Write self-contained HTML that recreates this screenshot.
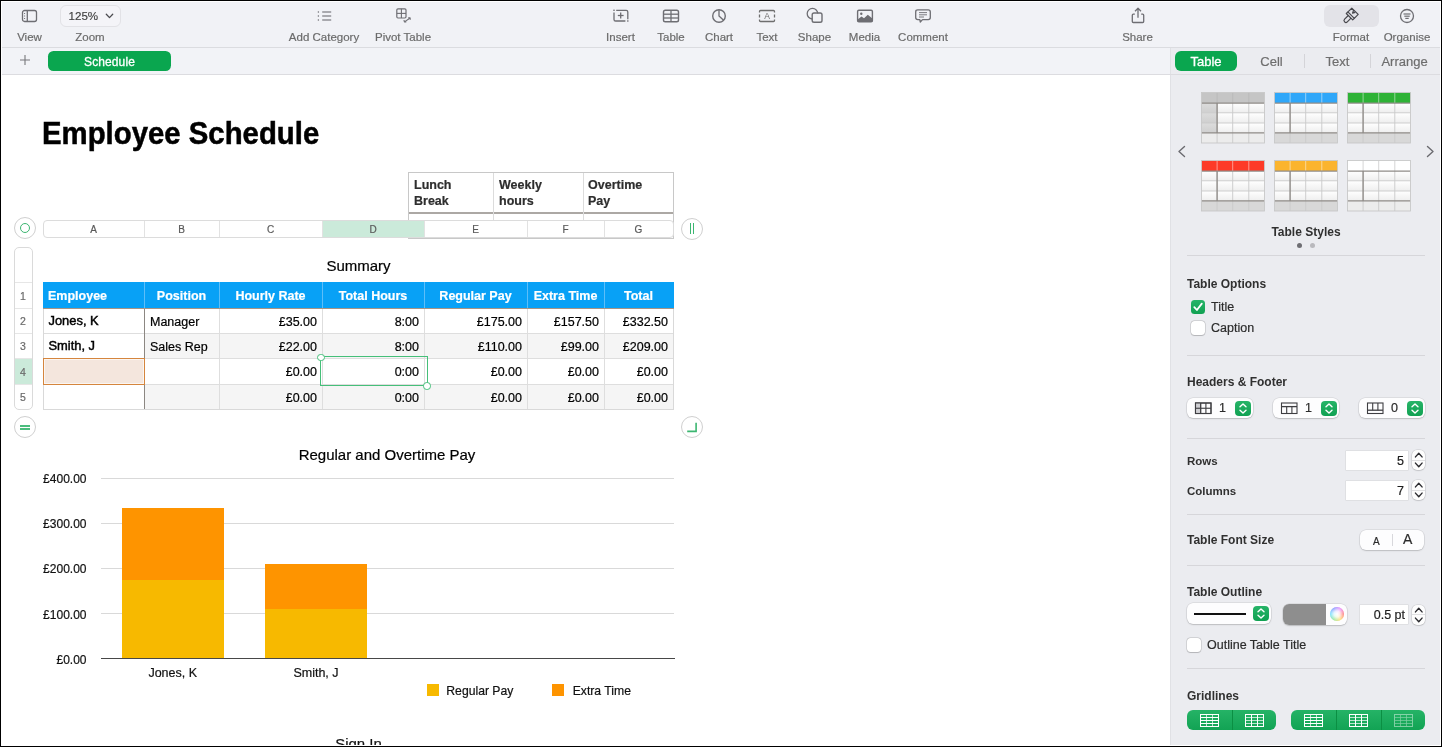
<!DOCTYPE html>
<html><head><meta charset="utf-8">
<style>
*{box-sizing:border-box;margin:0;padding:0}
html,body{width:1442px;height:747px;overflow:hidden;background:#000}
body{font-family:"Liberation Sans",sans-serif;position:relative;-webkit-font-smoothing:antialiased}
#frame{position:absolute;left:1px;top:1px;width:1440px;height:745px;background:#fff}
#app{position:absolute;left:0;top:0;width:1442px;height:747px;clip-path:inset(2px 2px 2px 2px);overflow:hidden;}
.a{position:absolute}
.t{position:absolute;white-space:nowrap;filter:grayscale(1)}
.lbl{filter:grayscale(1);position:absolute;top:32.0px;font-size:11.5px;line-height:11.5px;color:#6b6b70;-webkit-text-stroke:0.2px #6b6b70;white-space:nowrap;transform:translateX(-50%)}
.sb .t{-webkit-text-stroke:0.2px currentColor}
.sb .t[style*="bold"]{-webkit-text-stroke:0}
</style></head>
<body>
<div id="frame"></div>
<div id="app">
<div class="a" style="left:0;top:75px;width:1170px;height:672px;background:#fff"></div>
<div class="t" style="left:41.6px;top:117.5px;font-size:30.5px;line-height:31px;font-weight:bold;color:#000;transform:scaleX(0.962);transform-origin:0 0;-webkit-text-stroke:0.5px #000">Employee Schedule</div>
<div class="a" style="left:408px;top:172px;width:266px;height:67px;border:1px solid #c8c8c8;background:#fff"></div>
<div class="a" style="left:409px;top:212px;width:264px;height:2px;background:#aca8a4"></div>
<div class="a" style="left:493px;top:173px;width:1px;height:65px;background:#dcdcdc"></div>
<div class="a" style="left:583px;top:173px;width:1px;height:65px;background:#dcdcdc"></div>
<div class="t" style="left:414px;top:179.22px;font-size:12.5px;line-height:12.5px;color:#2e2e2e;font-weight:bold;-webkit-text-stroke:0.2px #2e2e2e;">Lunch</div>
<div class="t" style="left:414px;top:195.42px;font-size:12.5px;line-height:12.5px;color:#2e2e2e;font-weight:bold;-webkit-text-stroke:0.2px #2e2e2e;">Break</div>
<div class="t" style="left:499px;top:179.22px;font-size:12.5px;line-height:12.5px;color:#2e2e2e;font-weight:bold;-webkit-text-stroke:0.2px #2e2e2e;">Weekly</div>
<div class="t" style="left:499px;top:195.42px;font-size:12.5px;line-height:12.5px;color:#2e2e2e;font-weight:bold;-webkit-text-stroke:0.2px #2e2e2e;">hours</div>
<div class="t" style="left:588px;top:179.22px;font-size:12.5px;line-height:12.5px;color:#2e2e2e;font-weight:bold;-webkit-text-stroke:0.2px #2e2e2e;">Overtime</div>
<div class="t" style="left:588px;top:195.42px;font-size:12.5px;line-height:12.5px;color:#2e2e2e;font-weight:bold;-webkit-text-stroke:0.2px #2e2e2e;">Pay</div>
<div class="a" style="left:43px;top:220px;width:631px;height:18px;border:1px solid #dcdcdc;border-radius:4px;background:#fff"></div>
<div class="a" style="left:322px;top:221px;width:103px;height:16px;background:#cbeada"></div>
<div class="a" style="left:144px;top:221px;width:1px;height:16px;background:#e2e2e2"></div>
<div class="a" style="left:219px;top:221px;width:1px;height:16px;background:#e2e2e2"></div>
<div class="a" style="left:322px;top:221px;width:1px;height:16px;background:#e2e2e2"></div>
<div class="a" style="left:424px;top:221px;width:1px;height:16px;background:#e2e2e2"></div>
<div class="a" style="left:527px;top:221px;width:1px;height:16px;background:#e2e2e2"></div>
<div class="a" style="left:604px;top:221px;width:1px;height:16px;background:#e2e2e2"></div>
<div class="t" style="left:43px;top:224.73px;font-size:10px;line-height:10px;color:#5a5a5a;font-weight:normal;-webkit-text-stroke:0.2px #5a5a5a;width:101px;text-align:center;">A</div>
<div class="t" style="left:144px;top:224.73px;font-size:10px;line-height:10px;color:#5a5a5a;font-weight:normal;-webkit-text-stroke:0.2px #5a5a5a;width:75px;text-align:center;">B</div>
<div class="t" style="left:219px;top:224.73px;font-size:10px;line-height:10px;color:#5a5a5a;font-weight:normal;-webkit-text-stroke:0.2px #5a5a5a;width:103px;text-align:center;">C</div>
<div class="t" style="left:322px;top:224.73px;font-size:10px;line-height:10px;color:#5a5a5a;font-weight:normal;-webkit-text-stroke:0.2px #5a5a5a;width:102px;text-align:center;">D</div>
<div class="t" style="left:424px;top:224.73px;font-size:10px;line-height:10px;color:#5a5a5a;font-weight:normal;-webkit-text-stroke:0.2px #5a5a5a;width:103px;text-align:center;">E</div>
<div class="t" style="left:527px;top:224.73px;font-size:10px;line-height:10px;color:#5a5a5a;font-weight:normal;-webkit-text-stroke:0.2px #5a5a5a;width:77px;text-align:center;">F</div>
<div class="t" style="left:604px;top:224.73px;font-size:10px;line-height:10px;color:#5a5a5a;font-weight:normal;-webkit-text-stroke:0.2px #5a5a5a;width:69px;text-align:center;">G</div>
<div class="a" style="left:14px;top:247px;width:19px;height:163px;border:1px solid #dadada;border-radius:5px;background:#fff"></div>
<div class="a" style="left:15px;top:359px;width:17px;height:25px;background:#cbeada"></div>
<div class="a" style="left:15px;top:282px;width:17px;height:1px;background:#e6e6e6"></div>
<div class="a" style="left:15px;top:308px;width:17px;height:1px;background:#e6e6e6"></div>
<div class="a" style="left:15px;top:333px;width:17px;height:1px;background:#e6e6e6"></div>
<div class="a" style="left:15px;top:358px;width:17px;height:1px;background:#e6e6e6"></div>
<div class="a" style="left:15px;top:384px;width:17px;height:1px;background:#e6e6e6"></div>
<div class="t" style="left:14px;top:290.51px;font-size:10.5px;line-height:10.5px;color:#6a6a6a;font-weight:normal;-webkit-text-stroke:0.2px #6a6a6a;width:18px;text-align:center;">1</div>
<div class="t" style="left:14px;top:316.01px;font-size:10.5px;line-height:10.5px;color:#6a6a6a;font-weight:normal;-webkit-text-stroke:0.2px #6a6a6a;width:18px;text-align:center;">2</div>
<div class="t" style="left:14px;top:341.01px;font-size:10.5px;line-height:10.5px;color:#6a6a6a;font-weight:normal;-webkit-text-stroke:0.2px #6a6a6a;width:18px;text-align:center;">3</div>
<div class="t" style="left:14px;top:366.51px;font-size:10.5px;line-height:10.5px;color:#6a6a6a;font-weight:normal;-webkit-text-stroke:0.2px #6a6a6a;width:18px;text-align:center;">4</div>
<div class="t" style="left:14px;top:392.01px;font-size:10.5px;line-height:10.5px;color:#6a6a6a;font-weight:normal;-webkit-text-stroke:0.2px #6a6a6a;width:18px;text-align:center;">5</div>
<div class="t" style="left:43px;top:257.50px;font-size:15px;line-height:15px;color:#000;font-weight:normal;-webkit-text-stroke:0.2px #000;width:631px;text-align:center;">Summary</div>
<div class="a" style="left:43px;top:282px;width:631px;height:128px;background:#fff;border:1px solid #d9d9d9"></div>
<div class="a" style="left:43px;top:282px;width:631px;height:26px;background:#08a1f6"></div>
<div class="a" style="left:145px;top:334px;width:528px;height:24px;background:#f5f5f5"></div>
<div class="a" style="left:145px;top:385px;width:528px;height:24px;background:#f5f5f5"></div>
<div class="a" style="left:44px;top:333px;width:629px;height:1px;background:#dedede"></div>
<div class="a" style="left:44px;top:358px;width:629px;height:1px;background:#dedede"></div>
<div class="a" style="left:44px;top:384px;width:629px;height:1px;background:#dedede"></div>
<div class="a" style="left:219px;top:308px;width:1px;height:101px;background:#dedede"></div>
<div class="a" style="left:322px;top:308px;width:1px;height:101px;background:#dedede"></div>
<div class="a" style="left:424px;top:308px;width:1px;height:101px;background:#dedede"></div>
<div class="a" style="left:527px;top:308px;width:1px;height:101px;background:#dedede"></div>
<div class="a" style="left:604px;top:308px;width:1px;height:101px;background:#dedede"></div>
<div class="a" style="left:144px;top:282px;width:1px;height:26px;background:#5dbef9"></div>
<div class="a" style="left:219px;top:282px;width:1px;height:26px;background:#5dbef9"></div>
<div class="a" style="left:322px;top:282px;width:1px;height:26px;background:#5dbef9"></div>
<div class="a" style="left:424px;top:282px;width:1px;height:26px;background:#5dbef9"></div>
<div class="a" style="left:527px;top:282px;width:1px;height:26px;background:#5dbef9"></div>
<div class="a" style="left:604px;top:282px;width:1px;height:26px;background:#5dbef9"></div>
<div class="a" style="left:144px;top:308px;width:1px;height:101px;background:#8c8782"></div>
<div class="a" style="left:43px;top:307.5px;width:631px;height:1px;background:#a89484"></div>
<div class="t" style="left:48px;top:290.32px;font-size:12.5px;line-height:12.5px;color:#fff;font-weight:bold;-webkit-text-stroke:0.2px #fff;">Employee</div>
<div class="t" style="left:144px;top:290.32px;font-size:12.5px;line-height:12.5px;color:#fff;font-weight:bold;-webkit-text-stroke:0.2px #fff;width:75px;text-align:center;">Position</div>
<div class="t" style="left:219px;top:290.32px;font-size:12.5px;line-height:12.5px;color:#fff;font-weight:bold;-webkit-text-stroke:0.2px #fff;width:103px;text-align:center;">Hourly Rate</div>
<div class="t" style="left:322px;top:290.32px;font-size:12.5px;line-height:12.5px;color:#fff;font-weight:bold;-webkit-text-stroke:0.2px #fff;width:102px;text-align:center;">Total Hours</div>
<div class="t" style="left:424px;top:290.32px;font-size:12.5px;line-height:12.5px;color:#fff;font-weight:bold;-webkit-text-stroke:0.2px #fff;width:103px;text-align:center;">Regular Pay</div>
<div class="t" style="left:527px;top:290.32px;font-size:12.5px;line-height:12.5px;color:#fff;font-weight:bold;-webkit-text-stroke:0.2px #fff;width:77px;text-align:center;">Extra Time</div>
<div class="t" style="left:604px;top:290.32px;font-size:12.5px;line-height:12.5px;color:#fff;font-weight:bold;-webkit-text-stroke:0.2px #fff;width:69px;text-align:center;">Total</div>
<div class="a" style="left:43px;top:358px;width:102px;height:27px;background:#f4e6dd;border:1.6px solid #d5853d;box-shadow:inset 0 0 0 1px #fbf6f2"></div>
<div class="t" style="left:48.5px;top:315.48px;font-size:12.9px;line-height:12.9px;color:#000;font-weight:normal;-webkit-text-stroke:0.45px #000;">Jones, K</div>
<div class="t" style="left:150px;top:315.82px;font-size:12.5px;line-height:12.5px;color:#000;font-weight:normal;-webkit-text-stroke:0.2px #000;">Manager</div>
<div class="t" style="left:219px;top:315.82px;font-size:12.5px;line-height:12.5px;color:#000;font-weight:normal;-webkit-text-stroke:0.2px #000;width:98px;text-align:right;">£35.00</div>
<div class="t" style="left:322px;top:315.82px;font-size:12.5px;line-height:12.5px;color:#000;font-weight:normal;-webkit-text-stroke:0.2px #000;width:97px;text-align:right;">8:00</div>
<div class="t" style="left:424px;top:315.82px;font-size:12.5px;line-height:12.5px;color:#000;font-weight:normal;-webkit-text-stroke:0.2px #000;width:98px;text-align:right;">£175.00</div>
<div class="t" style="left:527px;top:315.82px;font-size:12.5px;line-height:12.5px;color:#000;font-weight:normal;-webkit-text-stroke:0.2px #000;width:72px;text-align:right;">£157.50</div>
<div class="t" style="left:604px;top:315.82px;font-size:12.5px;line-height:12.5px;color:#000;font-weight:normal;-webkit-text-stroke:0.2px #000;width:64px;text-align:right;">£332.50</div>
<div class="t" style="left:48.5px;top:340.48px;font-size:12.9px;line-height:12.9px;color:#000;font-weight:normal;-webkit-text-stroke:0.45px #000;">Smith, J</div>
<div class="t" style="left:150px;top:340.82px;font-size:12.5px;line-height:12.5px;color:#000;font-weight:normal;-webkit-text-stroke:0.2px #000;">Sales Rep</div>
<div class="t" style="left:219px;top:340.82px;font-size:12.5px;line-height:12.5px;color:#000;font-weight:normal;-webkit-text-stroke:0.2px #000;width:98px;text-align:right;">£22.00</div>
<div class="t" style="left:322px;top:340.82px;font-size:12.5px;line-height:12.5px;color:#000;font-weight:normal;-webkit-text-stroke:0.2px #000;width:97px;text-align:right;">8:00</div>
<div class="t" style="left:424px;top:340.82px;font-size:12.5px;line-height:12.5px;color:#000;font-weight:normal;-webkit-text-stroke:0.2px #000;width:98px;text-align:right;">£110.00</div>
<div class="t" style="left:527px;top:340.82px;font-size:12.5px;line-height:12.5px;color:#000;font-weight:normal;-webkit-text-stroke:0.2px #000;width:72px;text-align:right;">£99.00</div>
<div class="t" style="left:604px;top:340.82px;font-size:12.5px;line-height:12.5px;color:#000;font-weight:normal;-webkit-text-stroke:0.2px #000;width:64px;text-align:right;">£209.00</div>
<div class="t" style="left:219px;top:365.82px;font-size:12.5px;line-height:12.5px;color:#000;font-weight:normal;-webkit-text-stroke:0.2px #000;width:98px;text-align:right;">£0.00</div>
<div class="t" style="left:322px;top:365.82px;font-size:12.5px;line-height:12.5px;color:#000;font-weight:normal;-webkit-text-stroke:0.2px #000;width:97px;text-align:right;">0:00</div>
<div class="t" style="left:424px;top:365.82px;font-size:12.5px;line-height:12.5px;color:#000;font-weight:normal;-webkit-text-stroke:0.2px #000;width:98px;text-align:right;">£0.00</div>
<div class="t" style="left:527px;top:365.82px;font-size:12.5px;line-height:12.5px;color:#000;font-weight:normal;-webkit-text-stroke:0.2px #000;width:72px;text-align:right;">£0.00</div>
<div class="t" style="left:604px;top:365.82px;font-size:12.5px;line-height:12.5px;color:#000;font-weight:normal;-webkit-text-stroke:0.2px #000;width:64px;text-align:right;">£0.00</div>
<div class="t" style="left:219px;top:391.82px;font-size:12.5px;line-height:12.5px;color:#000;font-weight:normal;-webkit-text-stroke:0.2px #000;width:98px;text-align:right;">£0.00</div>
<div class="t" style="left:322px;top:391.82px;font-size:12.5px;line-height:12.5px;color:#000;font-weight:normal;-webkit-text-stroke:0.2px #000;width:97px;text-align:right;">0:00</div>
<div class="t" style="left:424px;top:391.82px;font-size:12.5px;line-height:12.5px;color:#000;font-weight:normal;-webkit-text-stroke:0.2px #000;width:98px;text-align:right;">£0.00</div>
<div class="t" style="left:527px;top:391.82px;font-size:12.5px;line-height:12.5px;color:#000;font-weight:normal;-webkit-text-stroke:0.2px #000;width:72px;text-align:right;">£0.00</div>
<div class="t" style="left:604px;top:391.82px;font-size:12.5px;line-height:12.5px;color:#000;font-weight:normal;-webkit-text-stroke:0.2px #000;width:64px;text-align:right;">£0.00</div>
<div class="a" style="left:320px;top:356.4px;width:107.5px;height:30px;border:1.5px solid #45bf79"></div>
<div class="a" style="left:317.0px;top:353.5px;width:7.5px;height:7.5px;border-radius:50%;background:#fff;border:1.4px solid #45bf79"></div>
<div class="a" style="left:423.0px;top:382.0px;width:7.5px;height:7.5px;border-radius:50%;background:#fff;border:1.4px solid #45bf79"></div>
<div class="a" style="left:13.8px;top:217px;width:22px;height:22px;border-radius:50%;background:#fff;border:1px solid #d0d0d0"></div><div class="a" style="left:19.8px;top:223px;width:10px;height:10px;border-radius:50%;border:1.4px solid #3cb671"></div>
<div class="a" style="left:681px;top:217.5px;width:22px;height:22px;border-radius:50%;background:#fff;border:1px solid #d0d0d0"></div><div class="a" style="left:689.5px;top:223px;width:1.2px;height:11px;background:#3cb671"></div><div class="a" style="left:693.3px;top:223px;width:1.2px;height:11px;background:#3cb671"></div>
<div class="a" style="left:13.8px;top:416.4px;width:22px;height:22px;border-radius:50%;background:#fff;border:1px solid #d0d0d0"></div><div class="a" style="left:19.8px;top:425px;width:10px;height:1.8px;background:#4cbd7e"></div><div class="a" style="left:19.8px;top:428.2px;width:10px;height:1.8px;background:#4cbd7e"></div>
<div class="a" style="left:681px;top:416px;width:22px;height:22px;border-radius:50%;background:#fff;border:1px solid #d0d0d0"></div><svg class="a" style="left:686px;top:421px" width="12" height="12" viewBox="0 0 12 12"><path d="M1.2 10.4 H10.1 V1.8" fill="none" stroke="#3cb671" stroke-width="1.6"/></svg>
<div class="t" style="left:43px;top:447.10px;font-size:15px;line-height:15px;color:#000;font-weight:normal;-webkit-text-stroke:0.2px #000;width:688px;text-align:center;">Regular and Overtime Pay</div>
<div class="a" style="left:101px;top:477.5px;width:573px;height:1px;background:#d9d9d9"></div>
<div class="t" style="left:0px;top:472.84px;font-size:12px;line-height:12px;color:#111;font-weight:normal;-webkit-text-stroke:0.2px #111;width:86.5px;text-align:right;">£400.00</div>
<div class="a" style="left:101px;top:522.75px;width:573px;height:1px;background:#d9d9d9"></div>
<div class="t" style="left:0px;top:518.09px;font-size:12px;line-height:12px;color:#111;font-weight:normal;-webkit-text-stroke:0.2px #111;width:86.5px;text-align:right;">£300.00</div>
<div class="a" style="left:101px;top:568px;width:573px;height:1px;background:#d9d9d9"></div>
<div class="t" style="left:0px;top:563.34px;font-size:12px;line-height:12px;color:#111;font-weight:normal;-webkit-text-stroke:0.2px #111;width:86.5px;text-align:right;">£200.00</div>
<div class="a" style="left:101px;top:613.25px;width:573px;height:1px;background:#d9d9d9"></div>
<div class="t" style="left:0px;top:608.59px;font-size:12px;line-height:12px;color:#111;font-weight:normal;-webkit-text-stroke:0.2px #111;width:86.5px;text-align:right;">£100.00</div>
<div class="t" style="left:0px;top:653.84px;font-size:12px;line-height:12px;color:#111;font-weight:normal;-webkit-text-stroke:0.2px #111;width:86.5px;text-align:right;">£0.00</div>
<div class="a" style="left:121.5px;top:508.04375px;width:102.5px;height:71.55625000000003px;background:#fe9400"></div><div class="a" style="left:121.5px;top:579.6px;width:102.5px;height:78.89999999999998px;background:#f7b900"></div>
<div class="a" style="left:265px;top:563.9275px;width:102px;height:45.272500000000036px;background:#fe9400"></div><div class="a" style="left:265px;top:609.2px;width:102px;height:49.299999999999955px;background:#f7b900"></div>
<div class="a" style="left:101px;top:657.8px;width:574px;height:1.6px;background:#474747"></div>
<div class="t" style="left:121.5px;top:667.12px;font-size:12.5px;line-height:12.5px;color:#111;font-weight:normal;-webkit-text-stroke:0.2px #111;width:102.5px;text-align:center;">Jones, K</div>
<div class="t" style="left:265px;top:667.12px;font-size:12.5px;line-height:12.5px;color:#111;font-weight:normal;-webkit-text-stroke:0.2px #111;width:102px;text-align:center;">Smith, J</div>
<div class="a" style="left:426.5px;top:684.2px;width:12px;height:12px;background:#f7b900"></div>
<div class="t" style="left:446.3px;top:685.07px;font-size:12.2px;line-height:12.2px;color:#111;font-weight:normal;-webkit-text-stroke:0.2px #111;">Regular Pay</div>
<div class="a" style="left:551.5px;top:684.2px;width:12px;height:12px;background:#fe9400"></div>
<div class="t" style="left:572.7px;top:685.07px;font-size:12.2px;line-height:12.2px;color:#111;font-weight:normal;-webkit-text-stroke:0.2px #111;">Extra Time</div>
<div class="t" style="left:43px;top:735.50px;font-size:15px;line-height:15px;color:#111;font-weight:normal;-webkit-text-stroke:0.2px #111;width:631px;text-align:center;">Sign In</div>
<div class="a" style="left:0;top:0;width:1442px;height:47px;background:#f1f2f6"></div>
<div class="a" style="left:0;top:47px;width:1442px;height:1px;background:#dbdce0"></div>
<div class="lbl" style="left:29.5px">View</div>
<div class="lbl" style="left:90px">Zoom</div>
<div class="lbl" style="left:324px">Add Category</div>
<div class="lbl" style="left:403px">Pivot Table</div>
<div class="lbl" style="left:620.5px">Insert</div>
<div class="lbl" style="left:671px">Table</div>
<div class="lbl" style="left:719px">Chart</div>
<div class="lbl" style="left:767px">Text</div>
<div class="lbl" style="left:814.5px">Shape</div>
<div class="lbl" style="left:864.5px">Media</div>
<div class="lbl" style="left:923px">Comment</div>
<div class="lbl" style="left:1137.5px">Share</div>
<div class="lbl" style="left:1351px">Format</div>
<div class="lbl" style="left:1407px">Organise</div>
<div class="a" style="left:60px;top:5px;width:61px;height:22px;border:1px solid #e2e2e6;border-radius:6px;background:#f4f4f8"></div>
<div class="t" style="left:68.5px;top:10.2px;font-size:11.6px;line-height:12px;color:#404045;-webkit-text-stroke:0.15px #404045">125%</div>
<svg class="a" style="left:104px;top:12px" width="11" height="8" viewBox="0 0 11 8"><path d="M2.3 2.3 L5.5 5.6 L8.7 2.3" fill="none" stroke="#4a4a4f" stroke-width="1.3" stroke-linecap="round" stroke-linejoin="round"/></svg>
<svg class="a" style="left:20px;top:8px" width="20" height="16" viewBox="0 0 20 16"><rect x="2.5" y="2.5" width="14" height="11" rx="2" fill="none" stroke="#6e6e73" stroke-width="1.3"/><line x1="7.3" y1="2.5" x2="7.3" y2="13.5" stroke="#6e6e73" stroke-width="1.3"/><line x1="4.6" y1="5" x2="4.6" y2="6" stroke="#6e6e73" stroke-width="1"/><line x1="4.6" y1="7.5" x2="4.6" y2="8.5" stroke="#6e6e73" stroke-width="1"/><line x1="4.6" y1="10" x2="4.6" y2="11" stroke="#6e6e73" stroke-width="1"/></svg>
<svg class="a" style="left:314px;top:6px" width="22" height="18" viewBox="0 0 22 18"><circle cx="4.4" cy="6" r="0.75" fill="#6e6e73"/><line x1="8.2" y1="6" x2="17.2" y2="6" stroke="#6e6e73" stroke-width="1.1"/><circle cx="4.4" cy="10" r="0.75" fill="#6e6e73"/><line x1="8.2" y1="10" x2="17.2" y2="10" stroke="#6e6e73" stroke-width="1.1"/><circle cx="4.4" cy="14" r="0.75" fill="#6e6e73"/><line x1="8.2" y1="14" x2="17.2" y2="14" stroke="#6e6e73" stroke-width="1.1"/></svg>
<svg class="a" style="left:393px;top:5px" width="22" height="20" viewBox="0 0 22 20"><rect x="3.8" y="3.8" width="9.2" height="9.2" rx="1.2" fill="none" stroke="#6e6e73" stroke-width="1.2"/><line x1="8.4" y1="3.8" x2="8.4" y2="13" stroke="#6e6e73" stroke-width="1.1"/><line x1="3.8" y1="8.4" x2="13" y2="8.4" stroke="#6e6e73" stroke-width="1.1"/><path d="M11.8 16.6 L16.8 13.2" stroke="#6e6e73" stroke-width="1.1"/><path d="M11 15 L11.4 16.9 L13.3 16.9" fill="none" stroke="#6e6e73" stroke-width="1.1" stroke-linejoin="round"/><path d="M15.2 12.9 L17.1 12.9 L17.3 14.8" fill="none" stroke="#6e6e73" stroke-width="1.1" stroke-linejoin="round"/></svg>
<svg class="a" style="left:611px;top:7px" width="20" height="17" viewBox="0 0 20 17"><g fill="none" stroke="#6e6e73" stroke-width="1.3"><path d="M5.2 3.3 H15.2 Q16.8 3.3 16.8 4.9 V12.3"/><path d="M3 5.6 V12.4 Q3 14 4.6 14 H14.4"/><line x1="9.7" y1="5.6" x2="9.7" y2="11.4"/><line x1="6.8" y1="8.5" x2="12.6" y2="8.5"/></g><rect x="2.3" y="2.6" width="1.4" height="1.4" fill="#6e6e73"/><rect x="16.1" y="13.3" width="1.4" height="1.4" fill="#6e6e73"/></svg>
<svg class="a" style="left:661px;top:8px" width="20" height="16" viewBox="0 0 20 16"><rect x="2.5" y="2.3" width="15" height="11.5" rx="1.8" fill="none" stroke="#6e6e73" stroke-width="1.4"/><line x1="2.5" y1="6.2" x2="17.5" y2="6.2" stroke="#6e6e73" stroke-width="1.3"/><line x1="2.5" y1="10" x2="17.5" y2="10" stroke="#6e6e73" stroke-width="1.3"/><line x1="10" y1="2.3" x2="10" y2="13.8" stroke="#6e6e73" stroke-width="1.3"/></svg>
<svg class="a" style="left:710px;top:7px" width="18" height="18" viewBox="0 0 18 18"><circle cx="9" cy="9" r="6.3" fill="none" stroke="#6e6e73" stroke-width="1.4"/><path d="M9 2.7 V9 L13.6 13.3" fill="none" stroke="#6e6e73" stroke-width="1.3" stroke-linejoin="round"/></svg>
<svg class="a" style="left:757px;top:8px;filter:grayscale(1)" width="20" height="16" viewBox="0 0 20 16"><path d="M2.5 4.5 V3.5 Q2.5 2.5 3.5 2.5 H16.5 Q17.5 2.5 17.5 3.5 V4.5 M17.5 6.5 V9.5 M17.5 11.5 V12.5 Q17.5 13.5 16.5 13.5 H3.5 Q2.5 13.5 2.5 12.5 V11.5 M2.5 6.5 V9.5" fill="none" stroke="#6e6e73" stroke-width="1.3"/><text x="10" y="11.3" font-family="Liberation Sans" font-size="8.5" fill="#6e6e73" text-anchor="middle">A</text></svg>
<svg class="a" style="left:805px;top:6px" width="20" height="19" viewBox="0 0 20 19"><path d="M7.2 13 A5.3 5.3 0 1 1 12.8 7.6" fill="none" stroke="#6e6e73" stroke-width="1.3"/><rect x="7.2" y="7" width="9.8" height="9.3" rx="1.8" fill="none" stroke="#6e6e73" stroke-width="1.4"/></svg>
<svg class="a" style="left:855px;top:8px" width="20" height="16" viewBox="0 0 20 16"><rect x="2.6" y="2.3" width="14.8" height="11.6" rx="1.3" fill="none" stroke="#6e6e73" stroke-width="1.4"/><circle cx="6.3" cy="5.8" r="1.2" fill="#6e6e73"/><path d="M2.6 13.9 V11.5 L6.5 8.6 L9 10.3 L12.8 6.8 L17.4 10.5 V13.9 Z" fill="#6e6e73"/></svg>
<svg class="a" style="left:913px;top:7px" width="20" height="18" viewBox="0 0 20 18"><path d="M4.8 2.8 H15.2 Q17.3 2.8 17.3 4.9 V10.5 Q17.3 12.6 15.2 12.6 H9.5 L7.3 15 L6.8 12.6 H4.8 Q2.7 12.6 2.7 10.5 V4.9 Q2.7 2.8 4.8 2.8 Z" fill="none" stroke="#6e6e73" stroke-width="1.3" stroke-linejoin="round"/><line x1="6" y1="5.6" x2="14" y2="5.6" stroke="#6e6e73" stroke-width="0.9"/><line x1="6" y1="7.8" x2="14" y2="7.8" stroke="#6e6e73" stroke-width="0.9"/><line x1="6" y1="10" x2="11" y2="10" stroke="#6e6e73" stroke-width="0.9"/></svg>
<svg class="a" style="left:1128px;top:6px" width="20" height="19" viewBox="0 0 20 19"><path d="M6.8 8.2 H5.3 Q4.3 8.2 4.3 9.2 V15.5 Q4.3 16.5 5.3 16.5 H14.7 Q15.7 16.5 15.7 15.5 V9.2 Q15.7 8.2 14.7 8.2 H13.2" fill="none" stroke="#6e6e73" stroke-width="1.3"/><line x1="10" y1="2.5" x2="10" y2="11.8" stroke="#6e6e73" stroke-width="1.3"/><path d="M7 5.3 L10 2.3 L13 5.3" fill="none" stroke="#6e6e73" stroke-width="1.3" stroke-linejoin="round"/></svg>
<div class="a" style="left:1324px;top:5px;width:55px;height:22px;border-radius:6px;background:#e3e3e8"></div>
<svg class="a" style="left:1341px;top:6px" width="20" height="19" viewBox="0 0 20 19"><g fill="none" stroke="#48484d" stroke-width="1.2" stroke-linejoin="round"><path d="M10.8 2.2 L17.2 8.4 L13.3 12.3 L6.9 5.9 Z"/><path d="M6.9 5.9 L5.3 7.5 L11.7 13.9 L13.3 12.3"/><path d="M7.3 9.5 L3.6 13.2 A1.9 1.9 0 0 0 6.3 15.9 L10 12.2"/><path d="M12.6 4 L11.6 7.2 L14.2 6.4"/></g></svg>
<svg class="a" style="left:1398px;top:7px" width="18" height="18" viewBox="0 0 18 18"><circle cx="9" cy="9" r="6.5" fill="none" stroke="#6e6e73" stroke-width="1.3"/><line x1="5.5" y1="7" x2="12.5" y2="7" stroke="#6e6e73" stroke-width="1.2"/><line x1="6.3" y1="9.2" x2="11.7" y2="9.2" stroke="#6e6e73" stroke-width="1.2"/><line x1="7.3" y1="11.4" x2="10.7" y2="11.4" stroke="#6e6e73" stroke-width="1.2"/></svg>
<div class="sb"><div class="a" style="left:0;top:48px;width:1170px;height:26px;background:#f2f3f7"></div>
<div class="a" style="left:0;top:74px;width:1442px;height:1px;background:#dcdce0"></div>
<svg class="a" style="left:19px;top:54px" width="12" height="12" viewBox="0 0 12 12"><path d="M6 1 V11 M1 6 H11" stroke="#77777c" stroke-width="1.1"/></svg>
<div class="a" style="left:48px;top:51px;width:123px;height:20px;border-radius:5.5px;background:#0aa64f"></div>
<div class="t" style="left:48px;width:123px;top:55.8px;font-size:12px;line-height:13px;color:#fff;text-align:center;letter-spacing:0.1px;-webkit-text-stroke:0.3px #fff">Schedule</div>
<div class="a" style="left:1170px;top:48px;width:272px;height:700px;background:#ebecf0"></div>
<div class="a" style="left:1170px;top:48px;width:1px;height:700px;background:#e0e1e5"></div>
<div class="a" style="left:1170px;top:74px;width:272px;height:1px;background:#dcdce0"></div>
<div class="a" style="left:1175px;top:51px;width:62px;height:20px;border-radius:6px;background:#0aa64f"></div>
<div class="t" style="left:1175px;width:62px;top:55px;font-size:13px;line-height:13px;color:#fff;text-align:center;-webkit-text-stroke:0.3px #fff">Table</div>
<div class="t" style="left:1238px;width:67px;top:55px;font-size:13px;line-height:13px;color:#6e6e73;text-align:center">Cell</div>
<div class="a" style="left:1304px;top:54px;width:1px;height:14px;background:#d4d4d8"></div>
<div class="t" style="left:1305px;width:65px;top:55px;font-size:13px;line-height:13px;color:#6e6e73;text-align:center">Text</div>
<div class="a" style="left:1370px;top:54px;width:1px;height:14px;background:#d4d4d8"></div>
<div class="t" style="left:1371px;width:67px;top:55px;font-size:13px;line-height:13px;color:#6e6e73;text-align:center">Arrange</div>
<svg class="a" style="left:1201px;top:92px" width="64" height="51.5" viewBox="0 0 64 51.5"><defs><linearGradient id="g120192" x1="0" y1="0" x2="0" y2="1"><stop offset="0" stop-color="#ffffff"/><stop offset="1" stop-color="#eeeeee"/></linearGradient><linearGradient id="g120192c" x1="0" y1="0" x2="0" y2="1"><stop offset="0" stop-color="#dcdcdc"/><stop offset="1" stop-color="#cfcfcf"/></linearGradient></defs><rect x="0.5" y="11.0" width="15.6" height="9.8" fill="url(#g120192c)"/><rect x="16.1" y="11.0" width="15.6" height="9.8" fill="url(#g120192)"/><rect x="31.7" y="11.0" width="16.099999999999998" height="9.8" fill="url(#g120192)"/><rect x="47.8" y="11.0" width="15.700000000000003" height="9.8" fill="url(#g120192)"/><rect x="0.5" y="20.8" width="15.6" height="10.2" fill="url(#g120192c)"/><rect x="16.1" y="20.8" width="15.6" height="10.2" fill="url(#g120192)"/><rect x="31.7" y="20.8" width="16.099999999999998" height="10.2" fill="url(#g120192)"/><rect x="47.8" y="20.8" width="15.700000000000003" height="10.2" fill="url(#g120192)"/><rect x="0.5" y="31.0" width="15.6" height="9.899999999999999" fill="url(#g120192c)"/><rect x="16.1" y="31.0" width="15.6" height="9.899999999999999" fill="url(#g120192)"/><rect x="31.7" y="31.0" width="16.099999999999998" height="9.899999999999999" fill="url(#g120192)"/><rect x="47.8" y="31.0" width="15.700000000000003" height="9.899999999999999" fill="url(#g120192)"/><rect x="0.5" y="40.9" width="63" height="10.100000000000001" fill="#ececec"/><rect x="0.5" y="0.5" width="63" height="10.5" fill="#c5c5c5"/><line x1="0.5" y1="20.8" x2="63.5" y2="20.8" stroke="#c9c9c9" stroke-width="0.9"/><line x1="0.5" y1="31.0" x2="63.5" y2="31.0" stroke="#c9c9c9" stroke-width="0.9"/><line x1="16.1" y1="0.5" x2="16.1" y2="11.0" stroke="#b0b0b0" stroke-opacity="0.6" stroke-width="0.9"/><line x1="16.1" y1="11.0" x2="16.1" y2="51.0" stroke="#c9c9c9" stroke-width="0.9"/><line x1="31.7" y1="0.5" x2="31.7" y2="11.0" stroke="#b0b0b0" stroke-opacity="0.6" stroke-width="0.9"/><line x1="31.7" y1="11.0" x2="31.7" y2="51.0" stroke="#c9c9c9" stroke-width="0.9"/><line x1="47.8" y1="0.5" x2="47.8" y2="11.0" stroke="#b0b0b0" stroke-opacity="0.6" stroke-width="0.9"/><line x1="47.8" y1="11.0" x2="47.8" y2="51.0" stroke="#c9c9c9" stroke-width="0.9"/><line x1="0.5" y1="11.1" x2="63.5" y2="11.1" stroke="#8f8b87" stroke-width="1.1"/><line x1="0.5" y1="40.9" x2="63.5" y2="40.9" stroke="#8f8b87" stroke-width="1.1"/><line x1="16.1" y1="11.0" x2="16.1" y2="40.9" stroke="#8f8b87" stroke-width="1.3"/><rect x="0.5" y="0.5" width="63" height="50.5" fill="none" stroke="#c8c8c8" stroke-width="0.9"/></svg>
<svg class="a" style="left:1274px;top:92px" width="64" height="51.5" viewBox="0 0 64 51.5"><defs><linearGradient id="g127492" x1="0" y1="0" x2="0" y2="1"><stop offset="0" stop-color="#ffffff"/><stop offset="1" stop-color="#eeeeee"/></linearGradient><linearGradient id="g127492c" x1="0" y1="0" x2="0" y2="1"><stop offset="0" stop-color="#dcdcdc"/><stop offset="1" stop-color="#cfcfcf"/></linearGradient></defs><rect x="0.5" y="11.0" width="15.6" height="9.8" fill="url(#g127492)"/><rect x="16.1" y="11.0" width="15.6" height="9.8" fill="url(#g127492)"/><rect x="31.7" y="11.0" width="16.099999999999998" height="9.8" fill="url(#g127492)"/><rect x="47.8" y="11.0" width="15.700000000000003" height="9.8" fill="url(#g127492)"/><rect x="0.5" y="20.8" width="15.6" height="10.2" fill="url(#g127492)"/><rect x="16.1" y="20.8" width="15.6" height="10.2" fill="url(#g127492)"/><rect x="31.7" y="20.8" width="16.099999999999998" height="10.2" fill="url(#g127492)"/><rect x="47.8" y="20.8" width="15.700000000000003" height="10.2" fill="url(#g127492)"/><rect x="0.5" y="31.0" width="15.6" height="9.899999999999999" fill="url(#g127492)"/><rect x="16.1" y="31.0" width="15.6" height="9.899999999999999" fill="url(#g127492)"/><rect x="31.7" y="31.0" width="16.099999999999998" height="9.899999999999999" fill="url(#g127492)"/><rect x="47.8" y="31.0" width="15.700000000000003" height="9.899999999999999" fill="url(#g127492)"/><rect x="0.5" y="40.9" width="63" height="10.100000000000001" fill="#d8d8d8"/><rect x="0.5" y="0.5" width="63" height="10.5" fill="#2fa7f9"/><line x1="0.5" y1="20.8" x2="63.5" y2="20.8" stroke="#c9c9c9" stroke-width="0.9"/><line x1="0.5" y1="31.0" x2="63.5" y2="31.0" stroke="#c9c9c9" stroke-width="0.9"/><line x1="16.1" y1="0.5" x2="16.1" y2="11.0" stroke="#ffffff" stroke-opacity="0.55" stroke-width="0.9"/><line x1="16.1" y1="11.0" x2="16.1" y2="51.0" stroke="#c9c9c9" stroke-width="0.9"/><line x1="31.7" y1="0.5" x2="31.7" y2="11.0" stroke="#ffffff" stroke-opacity="0.55" stroke-width="0.9"/><line x1="31.7" y1="11.0" x2="31.7" y2="51.0" stroke="#c9c9c9" stroke-width="0.9"/><line x1="47.8" y1="0.5" x2="47.8" y2="11.0" stroke="#ffffff" stroke-opacity="0.55" stroke-width="0.9"/><line x1="47.8" y1="11.0" x2="47.8" y2="51.0" stroke="#c9c9c9" stroke-width="0.9"/><line x1="0.5" y1="11.1" x2="63.5" y2="11.1" stroke="#8f8b87" stroke-width="1.1"/><line x1="0.5" y1="40.9" x2="63.5" y2="40.9" stroke="#8f8b87" stroke-width="1.1"/><line x1="16.1" y1="11.0" x2="16.1" y2="40.9" stroke="#8f8b87" stroke-width="1.3"/><rect x="0.5" y="0.5" width="63" height="50.5" fill="none" stroke="#c8c8c8" stroke-width="0.9"/></svg>
<svg class="a" style="left:1347px;top:92px" width="64" height="51.5" viewBox="0 0 64 51.5"><defs><linearGradient id="g134792" x1="0" y1="0" x2="0" y2="1"><stop offset="0" stop-color="#ffffff"/><stop offset="1" stop-color="#eeeeee"/></linearGradient><linearGradient id="g134792c" x1="0" y1="0" x2="0" y2="1"><stop offset="0" stop-color="#dcdcdc"/><stop offset="1" stop-color="#cfcfcf"/></linearGradient></defs><rect x="0.5" y="11.0" width="15.6" height="9.8" fill="url(#g134792)"/><rect x="16.1" y="11.0" width="15.6" height="9.8" fill="url(#g134792)"/><rect x="31.7" y="11.0" width="16.099999999999998" height="9.8" fill="url(#g134792)"/><rect x="47.8" y="11.0" width="15.700000000000003" height="9.8" fill="url(#g134792)"/><rect x="0.5" y="20.8" width="15.6" height="10.2" fill="url(#g134792)"/><rect x="16.1" y="20.8" width="15.6" height="10.2" fill="url(#g134792)"/><rect x="31.7" y="20.8" width="16.099999999999998" height="10.2" fill="url(#g134792)"/><rect x="47.8" y="20.8" width="15.700000000000003" height="10.2" fill="url(#g134792)"/><rect x="0.5" y="31.0" width="15.6" height="9.899999999999999" fill="url(#g134792)"/><rect x="16.1" y="31.0" width="15.6" height="9.899999999999999" fill="url(#g134792)"/><rect x="31.7" y="31.0" width="16.099999999999998" height="9.899999999999999" fill="url(#g134792)"/><rect x="47.8" y="31.0" width="15.700000000000003" height="9.899999999999999" fill="url(#g134792)"/><rect x="0.5" y="40.9" width="63" height="10.100000000000001" fill="#d8d8d8"/><rect x="0.5" y="0.5" width="63" height="10.5" fill="#2eb236"/><line x1="0.5" y1="20.8" x2="63.5" y2="20.8" stroke="#c9c9c9" stroke-width="0.9"/><line x1="0.5" y1="31.0" x2="63.5" y2="31.0" stroke="#c9c9c9" stroke-width="0.9"/><line x1="16.1" y1="0.5" x2="16.1" y2="11.0" stroke="#ffffff" stroke-opacity="0.55" stroke-width="0.9"/><line x1="16.1" y1="11.0" x2="16.1" y2="51.0" stroke="#c9c9c9" stroke-width="0.9"/><line x1="31.7" y1="0.5" x2="31.7" y2="11.0" stroke="#ffffff" stroke-opacity="0.55" stroke-width="0.9"/><line x1="31.7" y1="11.0" x2="31.7" y2="51.0" stroke="#c9c9c9" stroke-width="0.9"/><line x1="47.8" y1="0.5" x2="47.8" y2="11.0" stroke="#ffffff" stroke-opacity="0.55" stroke-width="0.9"/><line x1="47.8" y1="11.0" x2="47.8" y2="51.0" stroke="#c9c9c9" stroke-width="0.9"/><line x1="0.5" y1="11.1" x2="63.5" y2="11.1" stroke="#8f8b87" stroke-width="1.1"/><line x1="0.5" y1="40.9" x2="63.5" y2="40.9" stroke="#8f8b87" stroke-width="1.1"/><line x1="16.1" y1="11.0" x2="16.1" y2="40.9" stroke="#8f8b87" stroke-width="1.3"/><rect x="0.5" y="0.5" width="63" height="50.5" fill="none" stroke="#c8c8c8" stroke-width="0.9"/></svg>
<svg class="a" style="left:1201px;top:160px" width="64" height="51.5" viewBox="0 0 64 51.5"><defs><linearGradient id="g1201160" x1="0" y1="0" x2="0" y2="1"><stop offset="0" stop-color="#ffffff"/><stop offset="1" stop-color="#eeeeee"/></linearGradient><linearGradient id="g1201160c" x1="0" y1="0" x2="0" y2="1"><stop offset="0" stop-color="#dcdcdc"/><stop offset="1" stop-color="#cfcfcf"/></linearGradient></defs><rect x="0.5" y="11.0" width="15.6" height="9.8" fill="url(#g1201160)"/><rect x="16.1" y="11.0" width="15.6" height="9.8" fill="url(#g1201160)"/><rect x="31.7" y="11.0" width="16.099999999999998" height="9.8" fill="url(#g1201160)"/><rect x="47.8" y="11.0" width="15.700000000000003" height="9.8" fill="url(#g1201160)"/><rect x="0.5" y="20.8" width="15.6" height="10.2" fill="url(#g1201160)"/><rect x="16.1" y="20.8" width="15.6" height="10.2" fill="url(#g1201160)"/><rect x="31.7" y="20.8" width="16.099999999999998" height="10.2" fill="url(#g1201160)"/><rect x="47.8" y="20.8" width="15.700000000000003" height="10.2" fill="url(#g1201160)"/><rect x="0.5" y="31.0" width="15.6" height="9.899999999999999" fill="url(#g1201160)"/><rect x="16.1" y="31.0" width="15.6" height="9.899999999999999" fill="url(#g1201160)"/><rect x="31.7" y="31.0" width="16.099999999999998" height="9.899999999999999" fill="url(#g1201160)"/><rect x="47.8" y="31.0" width="15.700000000000003" height="9.899999999999999" fill="url(#g1201160)"/><rect x="0.5" y="40.9" width="63" height="10.100000000000001" fill="#d8d8d8"/><rect x="0.5" y="0.5" width="63" height="10.5" fill="#fd3a27"/><line x1="0.5" y1="20.8" x2="63.5" y2="20.8" stroke="#c9c9c9" stroke-width="0.9"/><line x1="0.5" y1="31.0" x2="63.5" y2="31.0" stroke="#c9c9c9" stroke-width="0.9"/><line x1="16.1" y1="0.5" x2="16.1" y2="11.0" stroke="#ffffff" stroke-opacity="0.55" stroke-width="0.9"/><line x1="16.1" y1="11.0" x2="16.1" y2="51.0" stroke="#c9c9c9" stroke-width="0.9"/><line x1="31.7" y1="0.5" x2="31.7" y2="11.0" stroke="#ffffff" stroke-opacity="0.55" stroke-width="0.9"/><line x1="31.7" y1="11.0" x2="31.7" y2="51.0" stroke="#c9c9c9" stroke-width="0.9"/><line x1="47.8" y1="0.5" x2="47.8" y2="11.0" stroke="#ffffff" stroke-opacity="0.55" stroke-width="0.9"/><line x1="47.8" y1="11.0" x2="47.8" y2="51.0" stroke="#c9c9c9" stroke-width="0.9"/><line x1="0.5" y1="11.1" x2="63.5" y2="11.1" stroke="#8f8b87" stroke-width="1.1"/><line x1="0.5" y1="40.9" x2="63.5" y2="40.9" stroke="#8f8b87" stroke-width="1.1"/><line x1="16.1" y1="11.0" x2="16.1" y2="40.9" stroke="#8f8b87" stroke-width="1.3"/><rect x="0.5" y="0.5" width="63" height="50.5" fill="none" stroke="#c8c8c8" stroke-width="0.9"/></svg>
<svg class="a" style="left:1274px;top:160px" width="64" height="51.5" viewBox="0 0 64 51.5"><defs><linearGradient id="g1274160" x1="0" y1="0" x2="0" y2="1"><stop offset="0" stop-color="#ffffff"/><stop offset="1" stop-color="#eeeeee"/></linearGradient><linearGradient id="g1274160c" x1="0" y1="0" x2="0" y2="1"><stop offset="0" stop-color="#dcdcdc"/><stop offset="1" stop-color="#cfcfcf"/></linearGradient></defs><rect x="0.5" y="11.0" width="15.6" height="9.8" fill="url(#g1274160)"/><rect x="16.1" y="11.0" width="15.6" height="9.8" fill="url(#g1274160)"/><rect x="31.7" y="11.0" width="16.099999999999998" height="9.8" fill="url(#g1274160)"/><rect x="47.8" y="11.0" width="15.700000000000003" height="9.8" fill="url(#g1274160)"/><rect x="0.5" y="20.8" width="15.6" height="10.2" fill="url(#g1274160)"/><rect x="16.1" y="20.8" width="15.6" height="10.2" fill="url(#g1274160)"/><rect x="31.7" y="20.8" width="16.099999999999998" height="10.2" fill="url(#g1274160)"/><rect x="47.8" y="20.8" width="15.700000000000003" height="10.2" fill="url(#g1274160)"/><rect x="0.5" y="31.0" width="15.6" height="9.899999999999999" fill="url(#g1274160)"/><rect x="16.1" y="31.0" width="15.6" height="9.899999999999999" fill="url(#g1274160)"/><rect x="31.7" y="31.0" width="16.099999999999998" height="9.899999999999999" fill="url(#g1274160)"/><rect x="47.8" y="31.0" width="15.700000000000003" height="9.899999999999999" fill="url(#g1274160)"/><rect x="0.5" y="40.9" width="63" height="10.100000000000001" fill="#d8d8d8"/><rect x="0.5" y="0.5" width="63" height="10.5" fill="#fbb42e"/><line x1="0.5" y1="20.8" x2="63.5" y2="20.8" stroke="#c9c9c9" stroke-width="0.9"/><line x1="0.5" y1="31.0" x2="63.5" y2="31.0" stroke="#c9c9c9" stroke-width="0.9"/><line x1="16.1" y1="0.5" x2="16.1" y2="11.0" stroke="#ffffff" stroke-opacity="0.55" stroke-width="0.9"/><line x1="16.1" y1="11.0" x2="16.1" y2="51.0" stroke="#c9c9c9" stroke-width="0.9"/><line x1="31.7" y1="0.5" x2="31.7" y2="11.0" stroke="#ffffff" stroke-opacity="0.55" stroke-width="0.9"/><line x1="31.7" y1="11.0" x2="31.7" y2="51.0" stroke="#c9c9c9" stroke-width="0.9"/><line x1="47.8" y1="0.5" x2="47.8" y2="11.0" stroke="#ffffff" stroke-opacity="0.55" stroke-width="0.9"/><line x1="47.8" y1="11.0" x2="47.8" y2="51.0" stroke="#c9c9c9" stroke-width="0.9"/><line x1="0.5" y1="11.1" x2="63.5" y2="11.1" stroke="#8f8b87" stroke-width="1.1"/><line x1="0.5" y1="40.9" x2="63.5" y2="40.9" stroke="#8f8b87" stroke-width="1.1"/><line x1="16.1" y1="11.0" x2="16.1" y2="40.9" stroke="#8f8b87" stroke-width="1.3"/><rect x="0.5" y="0.5" width="63" height="50.5" fill="none" stroke="#c8c8c8" stroke-width="0.9"/></svg>
<svg class="a" style="left:1347px;top:160px" width="64" height="51.5" viewBox="0 0 64 51.5"><defs><linearGradient id="g1347160" x1="0" y1="0" x2="0" y2="1"><stop offset="0" stop-color="#ffffff"/><stop offset="1" stop-color="#eeeeee"/></linearGradient><linearGradient id="g1347160c" x1="0" y1="0" x2="0" y2="1"><stop offset="0" stop-color="#dcdcdc"/><stop offset="1" stop-color="#cfcfcf"/></linearGradient></defs><rect x="0.5" y="11.0" width="15.6" height="9.8" fill="url(#g1347160)"/><rect x="16.1" y="11.0" width="15.6" height="9.8" fill="url(#g1347160)"/><rect x="31.7" y="11.0" width="16.099999999999998" height="9.8" fill="url(#g1347160)"/><rect x="47.8" y="11.0" width="15.700000000000003" height="9.8" fill="url(#g1347160)"/><rect x="0.5" y="20.8" width="15.6" height="10.2" fill="url(#g1347160)"/><rect x="16.1" y="20.8" width="15.6" height="10.2" fill="url(#g1347160)"/><rect x="31.7" y="20.8" width="16.099999999999998" height="10.2" fill="url(#g1347160)"/><rect x="47.8" y="20.8" width="15.700000000000003" height="10.2" fill="url(#g1347160)"/><rect x="0.5" y="31.0" width="15.6" height="9.899999999999999" fill="url(#g1347160)"/><rect x="16.1" y="31.0" width="15.6" height="9.899999999999999" fill="url(#g1347160)"/><rect x="31.7" y="31.0" width="16.099999999999998" height="9.899999999999999" fill="url(#g1347160)"/><rect x="47.8" y="31.0" width="15.700000000000003" height="9.899999999999999" fill="url(#g1347160)"/><rect x="0.5" y="40.9" width="63" height="10.100000000000001" fill="#ececec"/><rect x="0.5" y="0.5" width="63" height="10.5" fill="#ffffff"/><line x1="0.5" y1="20.8" x2="63.5" y2="20.8" stroke="#c9c9c9" stroke-width="0.9"/><line x1="0.5" y1="31.0" x2="63.5" y2="31.0" stroke="#c9c9c9" stroke-width="0.9"/><line x1="16.1" y1="0.5" x2="16.1" y2="11.0" stroke="#b0b0b0" stroke-opacity="0.6" stroke-width="0.9"/><line x1="16.1" y1="11.0" x2="16.1" y2="51.0" stroke="#c9c9c9" stroke-width="0.9"/><line x1="31.7" y1="0.5" x2="31.7" y2="11.0" stroke="#b0b0b0" stroke-opacity="0.6" stroke-width="0.9"/><line x1="31.7" y1="11.0" x2="31.7" y2="51.0" stroke="#c9c9c9" stroke-width="0.9"/><line x1="47.8" y1="0.5" x2="47.8" y2="11.0" stroke="#b0b0b0" stroke-opacity="0.6" stroke-width="0.9"/><line x1="47.8" y1="11.0" x2="47.8" y2="51.0" stroke="#c9c9c9" stroke-width="0.9"/><line x1="0.5" y1="11.1" x2="63.5" y2="11.1" stroke="#8f8b87" stroke-width="1.1"/><line x1="0.5" y1="40.9" x2="63.5" y2="40.9" stroke="#8f8b87" stroke-width="1.1"/><line x1="16.1" y1="11.0" x2="16.1" y2="40.9" stroke="#8f8b87" stroke-width="1.3"/><rect x="0.5" y="0.5" width="63" height="50.5" fill="none" stroke="#c8c8c8" stroke-width="0.9"/></svg>
<svg class="a" style="left:1176px;top:144px" width="12" height="15" viewBox="0 0 12 15"><path d="M8.5 2.5 L3 7.5 L8.5 12.5" fill="none" stroke="#6a6a6f" stroke-width="1.4" stroke-linecap="round" stroke-linejoin="round"/></svg>
<svg class="a" style="left:1424px;top:144px" width="12" height="15" viewBox="0 0 12 15"><path d="M3.5 2.5 L9 7.5 L3.5 12.5" fill="none" stroke="#6a6a6f" stroke-width="1.4" stroke-linecap="round" stroke-linejoin="round"/></svg>
<div class="t" style="left:1206px;width:200px;top:226px;font-size:12px;line-height:12px;font-weight:bold;color:#303034;text-align:center">Table Styles</div>
<div class="a" style="left:1296.5px;top:242.5px;width:5px;height:5px;border-radius:50%;background:#6e6e73"></div>
<div class="a" style="left:1310px;top:242.5px;width:5px;height:5px;border-radius:50%;background:#b9b9bd"></div>
<div class="a" style="left:1187px;top:255px;width:238px;height:1px;background:#d6d6da"></div>
<div class="t" style="left:1187px;top:278px;font-size:12px;line-height:12px;font-weight:bold;color:#303034">Table Options</div>
<div class="a" style="left:1191px;top:299.5px;width:14px;height:14px;border-radius:3.5px;background:linear-gradient(#27b468,#10a152)"></div>
<svg class="a" style="left:1191px;top:299.5px" width="14" height="14" viewBox="0 0 14 14"><path d="M3.3 7.2 L5.9 10 L10.8 3.6" fill="none" stroke="#fff" stroke-width="1.8" stroke-linecap="round" stroke-linejoin="round"/></svg>
<div class="t" style="left:1211px;top:300.5px;font-size:12.5px;line-height:13px;color:#2c2c30">Title</div>
<div class="a" style="left:1191px;top:320.5px;width:14px;height:14px;border-radius:3.5px;background:#fff;box-shadow:0 0 0 0.5px rgba(0,0,0,0.2),0 0.5px 1px rgba(0,0,0,0.15)"></div>
<div class="t" style="left:1211px;top:321.5px;font-size:12.5px;line-height:13px;color:#2c2c30">Caption</div>
<div class="a" style="left:1187px;top:355px;width:238px;height:1px;background:#d6d6da"></div>
<div class="t" style="left:1187px;top:376px;font-size:12px;line-height:12px;font-weight:bold;color:#303034">Headers &amp; Footer</div>
<div class="a" style="left:1187px;top:398px;width:66px;height:20px;border-radius:6px;background:#fdfdfe;box-shadow:0 0 0 0.5px rgba(0,0,0,0.12),0 1px 1.5px rgba(0,0,0,0.15)"></div>
<svg class="a" style="left:1194px;top:401px" width="18" height="14" viewBox="0 0 18 14"><g fill="none" stroke="#3e3e42" stroke-width="1.1"><rect x="1.5" y="2" width="15.5" height="10.5"/><rect x="1.5" y="2" width="5.2" height="10.5" fill="#d0d0d4" stroke="none"/><rect x="1.5" y="2" width="15.5" height="10.5"/><line x1="1.5" y1="7.25" x2="17" y2="7.25"/><line x1="6.7" y1="2" x2="6.7" y2="12.5" stroke-width="1.3"/><line x1="11.9" y1="2" x2="11.9" y2="12.5"/></g></svg>
<div class="t" style="left:1219px;top:402px;font-size:12.5px;line-height:13px;color:#2c2c30">1</div>
<div class="a" style="left:1235px;top:401px;width:16px;height:15px;border-radius:4px;background:linear-gradient(#27b468,#10a152)"></div><svg class="a" style="left:1235px;top:401px" width="16" height="15" viewBox="0 0 16 15"><path d="M5.0 5.7 L8.0 2.9000000000000004 L11.0 5.7 M5.0 9.3 L8.0 12.1 L11.0 9.3" fill="none" stroke="#fff" stroke-width="1.4" stroke-linecap="round" stroke-linejoin="round"/></svg>
<div class="a" style="left:1273px;top:398px;width:66px;height:20px;border-radius:6px;background:#fdfdfe;box-shadow:0 0 0 0.5px rgba(0,0,0,0.12),0 1px 1.5px rgba(0,0,0,0.15)"></div>
<svg class="a" style="left:1280px;top:401px" width="18" height="14" viewBox="0 0 18 14"><g fill="none" stroke="#3e3e42" stroke-width="1.1"><rect x="1.5" y="2" width="15.5" height="10.5"/><line x1="1.5" y1="5.6" x2="17" y2="5.6" stroke-width="1.3"/><line x1="6.7" y1="5.6" x2="6.7" y2="12.5"/><line x1="11.9" y1="5.6" x2="11.9" y2="12.5"/></g></svg>
<div class="t" style="left:1305px;top:402px;font-size:12.5px;line-height:13px;color:#2c2c30">1</div>
<div class="a" style="left:1321px;top:401px;width:16px;height:15px;border-radius:4px;background:linear-gradient(#27b468,#10a152)"></div><svg class="a" style="left:1321px;top:401px" width="16" height="15" viewBox="0 0 16 15"><path d="M5.0 5.7 L8.0 2.9000000000000004 L11.0 5.7 M5.0 9.3 L8.0 12.1 L11.0 9.3" fill="none" stroke="#fff" stroke-width="1.4" stroke-linecap="round" stroke-linejoin="round"/></svg>
<div class="a" style="left:1359px;top:398px;width:66px;height:20px;border-radius:6px;background:#fdfdfe;box-shadow:0 0 0 0.5px rgba(0,0,0,0.12),0 1px 1.5px rgba(0,0,0,0.15)"></div>
<svg class="a" style="left:1366px;top:401px" width="18" height="14" viewBox="0 0 18 14"><g fill="none" stroke="#3e3e42" stroke-width="1.1"><rect x="1.5" y="2" width="15.5" height="10.5"/><line x1="1.5" y1="9.2" x2="17" y2="9.2" stroke-width="1.3"/><line x1="6.7" y1="2" x2="6.7" y2="9.2"/><line x1="11.9" y1="2" x2="11.9" y2="9.2"/></g></svg>
<div class="t" style="left:1391px;top:402px;font-size:12.5px;line-height:13px;color:#2c2c30">0</div>
<div class="a" style="left:1407px;top:401px;width:16px;height:15px;border-radius:4px;background:linear-gradient(#27b468,#10a152)"></div><svg class="a" style="left:1407px;top:401px" width="16" height="15" viewBox="0 0 16 15"><path d="M5.0 5.7 L8.0 2.9000000000000004 L11.0 5.7 M5.0 9.3 L8.0 12.1 L11.0 9.3" fill="none" stroke="#fff" stroke-width="1.4" stroke-linecap="round" stroke-linejoin="round"/></svg>
<div class="a" style="left:1187px;top:438px;width:238px;height:1px;background:#d6d6da"></div>
<div class="t" style="left:1187px;top:455px;font-size:11.5px;line-height:12px;font-weight:bold;color:#303034">Rows</div>
<div class="t" style="left:1187px;top:485px;font-size:11.5px;line-height:12px;font-weight:bold;color:#303034">Columns</div>
<div class="a" style="left:1346px;top:451px;width:62px;height:19px;background:#fff;box-shadow:0 0 0 0.5px rgba(0,0,0,0.1)"></div>
<div class="t" style="left:1346px;width:58px;top:455px;font-size:12.5px;line-height:13px;color:#1e1e22;text-align:right">5</div>
<div class="a" style="left:1411.5px;top:450px;width:13.5px;height:20px;border-radius:5px;background:#fdfdfd;box-shadow:0 0 0 0.5px rgba(0,0,0,0.12),0 0.5px 1.5px rgba(0,0,0,0.18)"></div><div class="a" style="left:1411.5px;top:459.5px;width:13.5px;height:1px;background:#e0e0e2"></div><svg class="a" style="left:1411.5px;top:450px" width="13.5" height="20" viewBox="0 0 13.5 20"><path d="M3.45 6.9 L6.75 3.3 L10.05 6.9 M3.45 13.1 L6.75 16.7 L10.05 13.1" fill="none" stroke="#2a2a2e" stroke-width="1.4" stroke-linecap="round" stroke-linejoin="round"/></svg>
<div class="a" style="left:1346px;top:481px;width:62px;height:19px;background:#fff;box-shadow:0 0 0 0.5px rgba(0,0,0,0.1)"></div>
<div class="t" style="left:1346px;width:58px;top:485px;font-size:12.5px;line-height:13px;color:#1e1e22;text-align:right">7</div>
<div class="a" style="left:1411.5px;top:480px;width:13.5px;height:20px;border-radius:5px;background:#fdfdfd;box-shadow:0 0 0 0.5px rgba(0,0,0,0.12),0 0.5px 1.5px rgba(0,0,0,0.18)"></div><div class="a" style="left:1411.5px;top:489.5px;width:13.5px;height:1px;background:#e0e0e2"></div><svg class="a" style="left:1411.5px;top:480px" width="13.5" height="20" viewBox="0 0 13.5 20"><path d="M3.45 6.9 L6.75 3.3 L10.05 6.9 M3.45 13.1 L6.75 16.7 L10.05 13.1" fill="none" stroke="#2a2a2e" stroke-width="1.4" stroke-linecap="round" stroke-linejoin="round"/></svg>
<div class="a" style="left:1187px;top:514px;width:238px;height:1px;background:#d6d6da"></div>
<div class="t" style="left:1187px;top:534px;font-size:12px;line-height:12px;font-weight:bold;color:#303034">Table Font Size</div>
<div class="a" style="left:1360px;top:530px;width:64px;height:20px;border-radius:6px;background:#fdfdfe;box-shadow:0 0 0 0.5px rgba(0,0,0,0.12),0 1px 1.5px rgba(0,0,0,0.15)"></div>
<div class="a" style="left:1392px;top:534px;width:1px;height:12px;background:#d8d8dc"></div>
<div class="t" style="left:1373px;top:536.5px;font-size:10px;line-height:10px;color:#2c2c30">A</div>
<div class="t" style="left:1403px;top:532px;font-size:14px;line-height:14px;color:#2c2c30">A</div>
<div class="a" style="left:1187px;top:565px;width:238px;height:1px;background:#d6d6da"></div>
<div class="t" style="left:1187px;top:586px;font-size:12px;line-height:12px;font-weight:bold;color:#303034">Table Outline</div>
<div class="a" style="left:1187px;top:603px;width:84px;height:21px;border-radius:6px;background:#fdfdfe;box-shadow:0 0 0 0.5px rgba(0,0,0,0.12),0 1px 1.5px rgba(0,0,0,0.15)"></div>
<div class="a" style="left:1194px;top:613px;width:52px;height:2px;background:#111"></div>
<div class="a" style="left:1253px;top:606px;width:16px;height:15px;border-radius:4px;background:linear-gradient(#27b468,#10a152)"></div><svg class="a" style="left:1253px;top:606px" width="16" height="15" viewBox="0 0 16 15"><path d="M5.0 5.7 L8.0 2.9000000000000004 L11.0 5.7 M5.0 9.3 L8.0 12.1 L11.0 9.3" fill="none" stroke="#fff" stroke-width="1.4" stroke-linecap="round" stroke-linejoin="round"/></svg>
<div class="a" style="left:1283px;top:603.5px;width:64px;height:21px;border-radius:6px;background:#fdfdfe;box-shadow:0 0 0 0.5px rgba(0,0,0,0.12),0 1px 1.5px rgba(0,0,0,0.15);overflow:hidden"><div class="a" style="left:0;top:0;width:43px;height:21px;background:#8e8e8e"></div></div>
<div class="a" style="left:1329.5px;top:606.5px;width:14px;height:14px;border-radius:50%;background:conic-gradient(from 90deg,#ff5a5a,#ffd54a,#7be07b,#4fd6ff,#6a7bff,#e26aff,#ff5a5a)"></div>
<div class="a" style="left:1329.5px;top:606.5px;width:14px;height:14px;border-radius:50%;background:radial-gradient(circle,#fff 0%,rgba(255,255,255,0.85) 30%,rgba(255,255,255,0.2) 75%,rgba(255,255,255,0) 100%)"></div>
<div class="a" style="left:1360px;top:605px;width:48px;height:19px;background:#fff;box-shadow:0 0 0 0.5px rgba(0,0,0,0.1)"></div>
<div class="t" style="left:1360px;width:45px;top:609px;font-size:12.5px;line-height:13px;color:#1e1e22;text-align:right">0.5 pt</div>
<div class="a" style="left:1411.5px;top:604.5px;width:13.5px;height:20px;border-radius:5px;background:#fdfdfd;box-shadow:0 0 0 0.5px rgba(0,0,0,0.12),0 0.5px 1.5px rgba(0,0,0,0.18)"></div><div class="a" style="left:1411.5px;top:614.0px;width:13.5px;height:1px;background:#e0e0e2"></div><svg class="a" style="left:1411.5px;top:604.5px" width="13.5" height="20" viewBox="0 0 13.5 20"><path d="M3.45 6.9 L6.75 3.3 L10.05 6.9 M3.45 13.1 L6.75 16.7 L10.05 13.1" fill="none" stroke="#2a2a2e" stroke-width="1.4" stroke-linecap="round" stroke-linejoin="round"/></svg>
<div class="a" style="left:1187px;top:638px;width:14px;height:14px;border-radius:3.5px;background:#fff;box-shadow:0 0 0 0.5px rgba(0,0,0,0.2),0 0.5px 1px rgba(0,0,0,0.15)"></div>
<div class="t" style="left:1207px;top:639px;font-size:12.5px;line-height:13px;color:#2c2c30">Outline Table Title</div>
<div class="a" style="left:1187px;top:668px;width:238px;height:1px;background:#d6d6da"></div>
<div class="t" style="left:1187px;top:690px;font-size:12px;line-height:12px;font-weight:bold;color:#303034">Gridlines</div>
<div class="a" style="left:1187px;top:710px;width:89px;height:20px;border-radius:6px;background:linear-gradient(#25b366,#12a354)"></div>
<div class="a" style="left:1232px;top:710px;width:1px;height:20px;background:#0b8f43"></div>
<div class="a" style="left:1291px;top:710px;width:134px;height:20px;border-radius:6px;background:linear-gradient(#25b366,#12a354)"></div>
<div class="a" style="left:1336px;top:710px;width:1px;height:20px;background:#0b8f43"></div>
<div class="a" style="left:1381px;top:710px;width:1px;height:20px;background:#0b8f43"></div>
<svg class="a" style="left:1199px;top:713px" width="20" height="14" viewBox="0 0 20 14"><g stroke="#fff" stroke-width="1" fill="none" opacity="1"><rect x="1.5" y="1.5" width="18" height="12"/><line x1="1.5" y1="4.5" x2="19.5" y2="4.5" stroke-opacity="1"/><line x1="1.5" y1="7.5" x2="19.5" y2="7.5" stroke-opacity="1"/><line x1="1.5" y1="10.5" x2="19.5" y2="10.5" stroke-opacity="1"/><line x1="7.5" y1="1.5" x2="7.5" y2="13.5" stroke-opacity="0.7"/><line x1="13.5" y1="1.5" x2="13.5" y2="13.5" stroke-opacity="0.7"/></g></svg>
<svg class="a" style="left:1244px;top:713px" width="20" height="14" viewBox="0 0 20 14"><g stroke="#fff" stroke-width="1" fill="none" opacity="1"><rect x="1.5" y="1.5" width="18" height="12"/><line x1="1.5" y1="4.5" x2="19.5" y2="4.5" stroke-opacity="0.7"/><line x1="1.5" y1="7.5" x2="19.5" y2="7.5" stroke-opacity="0.7"/><line x1="1.5" y1="10.5" x2="19.5" y2="10.5" stroke-opacity="0.7"/><line x1="7.5" y1="1.5" x2="7.5" y2="13.5" stroke-opacity="1"/><line x1="13.5" y1="1.5" x2="13.5" y2="13.5" stroke-opacity="1"/></g></svg>
<svg class="a" style="left:1303px;top:713px" width="20" height="14" viewBox="0 0 20 14"><g stroke="#fff" stroke-width="1" fill="none" opacity="1"><rect x="1.5" y="1.5" width="18" height="12"/><line x1="1.5" y1="4.5" x2="19.5" y2="4.5" stroke-opacity="1"/><line x1="1.5" y1="7.5" x2="19.5" y2="7.5" stroke-opacity="1"/><line x1="1.5" y1="10.5" x2="19.5" y2="10.5" stroke-opacity="1"/><line x1="7.5" y1="1.5" x2="7.5" y2="13.5" stroke-opacity="0.7"/><line x1="13.5" y1="1.5" x2="13.5" y2="13.5" stroke-opacity="0.7"/></g></svg>
<svg class="a" style="left:1348px;top:713px" width="20" height="14" viewBox="0 0 20 14"><g stroke="#fff" stroke-width="1" fill="none" opacity="1"><rect x="1.5" y="1.5" width="18" height="12"/><line x1="1.5" y1="4.5" x2="19.5" y2="4.5" stroke-opacity="0.7"/><line x1="1.5" y1="7.5" x2="19.5" y2="7.5" stroke-opacity="0.7"/><line x1="1.5" y1="10.5" x2="19.5" y2="10.5" stroke-opacity="0.7"/><line x1="7.5" y1="1.5" x2="7.5" y2="13.5" stroke-opacity="1"/><line x1="13.5" y1="1.5" x2="13.5" y2="13.5" stroke-opacity="1"/></g></svg>
<svg class="a" style="left:1393px;top:713px" width="20" height="14" viewBox="0 0 20 14"><g stroke="#fff" stroke-width="1" fill="none" opacity="0.45"><rect x="1.5" y="1.5" width="18" height="12"/><line x1="1.5" y1="4.5" x2="19.5" y2="4.5" stroke-opacity="0.7"/><line x1="1.5" y1="7.5" x2="19.5" y2="7.5" stroke-opacity="0.7"/><line x1="1.5" y1="10.5" x2="19.5" y2="10.5" stroke-opacity="0.7"/><line x1="7.5" y1="1.5" x2="7.5" y2="13.5" stroke-opacity="0.7"/><line x1="13.5" y1="1.5" x2="13.5" y2="13.5" stroke-opacity="0.7"/></g></svg></div>
</div>
</body></html>
